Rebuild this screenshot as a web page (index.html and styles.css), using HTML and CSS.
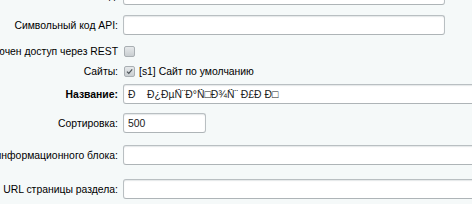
FILE: index.html
```html
<!DOCTYPE html>
<html lang="ru">
<head>
<meta charset="utf-8">
<title>Инфоблок</title>
<link rel="stylesheet" href="styles.css">
</head>
<body>
<div class="page">
  <div class="form">
    <div class="row r-input">
      <div class="label">Символьный код:</div>
      <div class="field"><input class="inp inp-mid" type="text"></div>
    </div>
    <div class="row r-input">
      <div class="label">Символьный код API:</div>
      <div class="field"><input class="inp inp-mid" type="text"></div>
    </div>
    <div class="row r-rest">
      <div class="label">Включен доступ через REST</div>
      <div class="field"><span class="cb"></span></div>
    </div>
    <div class="row r-sites">
      <div class="label">Сайты:</div>
      <div class="field"><span class="cb"><svg viewBox="0 0 10 10" class="tick"><path d="M2.2 5.2 L4.2 7.2 L8 2.6" fill="none" stroke="#4b5358" stroke-width="1.3"/></svg></span><span class="cbtext">[s1] Сайт по умолчанию</span></div>
    </div>
    <div class="row r-name">
      <div class="label bold">Название:</div>
      <div class="field"><input class="inp inp-wide" type="text" value="Ð    Ð¿ÐµÑ¨Ð°Ñ□Ð¾Ñ¨ Ð£Ð Ð□"></div>
    </div>
    <div class="row r-sort">
      <div class="label">Сортировка:</div>
      <div class="field"><input class="inp inp-short" type="text" value="500"></div>
    </div>
    <div class="row r-big">
      <div class="label">URL страницы информационного блока:</div>
      <div class="field"><input class="inp inp-wide" type="text"></div>
    </div>
    <div class="row r-big">
      <div class="label">URL страницы раздела:</div>
      <div class="field"><input class="inp inp-wide" type="text"></div>
    </div>
  </div>
</div>
</body>
</html>
```

FILE: styles.css
```css
html, body {
  margin: 0;
  padding: 0;
  background: #ffffff;
  overflow: hidden;
}
.page {
  width: 472px;
  height: 204px;
  background: #f5f9f9;
  overflow: hidden;
  font-family: "Liberation Sans", Arial, sans-serif;
  font-size: 10.4px;
  color: #000;
}
.form {
  margin-top: -20px;
}
.row {
  display: grid;
  grid-template-columns: 118px 1fr;
  align-items: center;
}
.r-input { height: 30px; }
.r-rest { height: 22px; }
.r-sites { height: 18px; }
.r-name { height: 28px; }
.r-sort { height: 30px; }
.r-big { height: 34px; }
.label {
  display: flex;
  justify-content: flex-end;
  white-space: nowrap;
  min-width: 0;
}
.label.bold { font-weight: bold; }
.field {
  padding-left: 5px;
  display: flex;
  align-items: center;
  min-width: 0;
}
.inp {
  box-sizing: border-box;
  height: 20px;
  border: 1px solid #b9bfc2;
  border-bottom-color: #aeb4b7;
  border-radius: 3px;
  background: #fff;
  box-shadow: inset 0 1px 1px rgba(180, 188, 191, 0.35);
  font-family: "Liberation Sans", Arial, sans-serif;
  font-size: 10.4px;
  color: #222;
  padding: 0 4px;
  margin: 0;
  outline: none;
}
.inp-mid { width: 322px; }
.inp-wide { width: 400px; flex-shrink: 0; }
.inp-short { width: 83px; }
.cb {
  box-sizing: border-box;
  width: 11px;
  height: 11px;
  border: 1px solid #a9afb3;
  border-radius: 2px;
  background: linear-gradient(#e6e9eb, #c9ced1);
  display: inline-flex;
  align-items: center;
  justify-content: center;
  margin-left: 1px;
}
.tick {
  width: 9px;
  height: 9px;
}
.cbtext {
  margin-left: 4px;
  white-space: nowrap;
}
```
